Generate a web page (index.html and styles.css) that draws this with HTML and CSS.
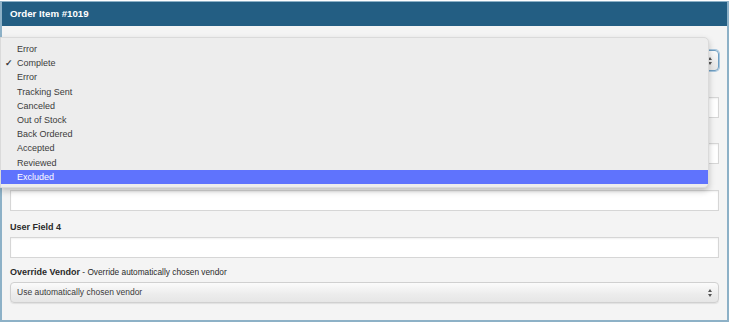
FILE: index.html
```html
<!DOCTYPE html>
<html lang="en">
  <head>
    <meta charset="UTF-8" />
    <meta name="viewport" content="width=device-width, initial-scale=1.0" />
    <title>Order Item #1019</title>
    <link rel="stylesheet" href="styles.css">
  </head>
  <body>
    <div class="panel">
      <div class="panel-header">Order Item #1019</div>

      <div class="panel-body">
        <!-- labels of the first fields sit under the open menu -->
        <div class="field">
          <label class="covered"></label>
          <div class="select focused"><i class="arrows"></i></div>
        </div>
        <div class="field">
          <label class="covered"></label>
          <div class="input"></div>
        </div>
        <div class="field">
          <label class="covered"></label>
          <div class="input"></div>
        </div>
        <div class="field">
          <label class="covered"></label>
          <div class="input"></div>
        </div>
        <div class="field">
          <label><b>User Field 4</b></label>
          <div class="input"></div>
        </div>
        <div class="field last">
          <label><b>Override Vendor</b> - Override automatically chosen vendor</label>
          <div class="select"><span>Use automatically chosen vendor</span><i class="arrows"></i></div>
        </div>
      </div>
    </div>

    <!-- open status menu -->
    <ul class="menu">
      <li>Error</li>
      <li class="checked">Complete</li>
      <li>Error</li>
      <li>Tracking Sent</li>
      <li>Canceled</li>
      <li>Out of Stock</li>
      <li>Back Ordered</li>
      <li>Accepted</li>
      <li>Reviewed</li>
      <li class="active">Excluded</li>
    </ul>
  </body>
</html>
```

FILE: styles.css
```css
body {
  margin: 0;
  padding: 1px 4px 0 0;
  font-family: "Liberation Sans", Arial, sans-serif;
  font-size: 8.3px;
  color: #333;
  background: #ffffff;
}
.panel {
  border: 2px solid #8db1c7;
  border-top: 1px solid #8db1c7;
  background: #f4f4f4;
}
.panel-header {
  background: #235e83;
  color: white;
  font-weight: bold;
  font-size: 9.7px;
  height: 24px;
  line-height: 24px;
  padding-left: 8px;
}
.panel-body {
  padding: 8px 8px 17px 8px;
}
.field {
  margin-bottom: 9.7px;
}
.field.last {
  margin-top: -1px;
  margin-bottom: 0;
}
.field label {
  display: block;
  height: 12px;
  line-height: 12px;
  margin-bottom: 4px;
  color: #2a2a2a;
}
.field label b {
  font-size: 9px;
}
.input {
  height: 19px;
  background: white;
  border: 1px solid #d6d6d6;
  box-shadow: inset 0 1px 2px rgba(0, 0, 0, 0.06);
}
.select {
  position: relative;
  height: 19px;
  line-height: 19px;
  padding-left: 6px;
  border: 1px solid #d0d0d0;
  border-radius: 4px;
  background: linear-gradient(#fbfbfb, #ececec 60%, #e6e6e6);
  box-shadow: 0 1px 1px rgba(0, 0, 0, 0.08);
  color: #3a3a3a;
  font-size: 8.5px;
}
.select.focused {
  border-color: #6f9fc3;
  box-shadow: 0 0 0 1px #a9c7de;
}
.arrows {
  position: absolute;
  right: 6px;
  top: 6px;
  width: 0;
  height: 0;
  border-left: 2px solid transparent;
  border-right: 2px solid transparent;
  border-bottom: 3px solid #555;
}
.arrows::after {
  content: "";
  position: absolute;
  left: -2px;
  top: 5px;
  border-left: 2px solid transparent;
  border-right: 2px solid transparent;
  border-top: 3px solid #555;
}

/* Dropdown overlay */
.menu {
  position: absolute;
  left: 0;
  top: 37px;
  width: 709px;
  margin: 0;
  padding: 4px 0 3px 0;
  list-style: none;
  background: #ededed;
  border: 1px solid #dadada;
  border-radius: 0 5px 5px 0;
  box-shadow: 0 3px 6px rgba(0, 0, 0, 0.22);
  box-sizing: border-box;
  font-size: 9px;
}
.menu li {
  position: relative;
  height: 14.2px;
  line-height: 14.2px;
  padding-left: 16px;
  color: #3b3b3b;
}
.menu li.checked::before {
  content: "\2713";
  position: absolute;
  left: 4px;
  font-size: 9px;
  font-weight: bold;
}
.menu li.active {
  background: #5f73fd;
  color: white;
}
```
